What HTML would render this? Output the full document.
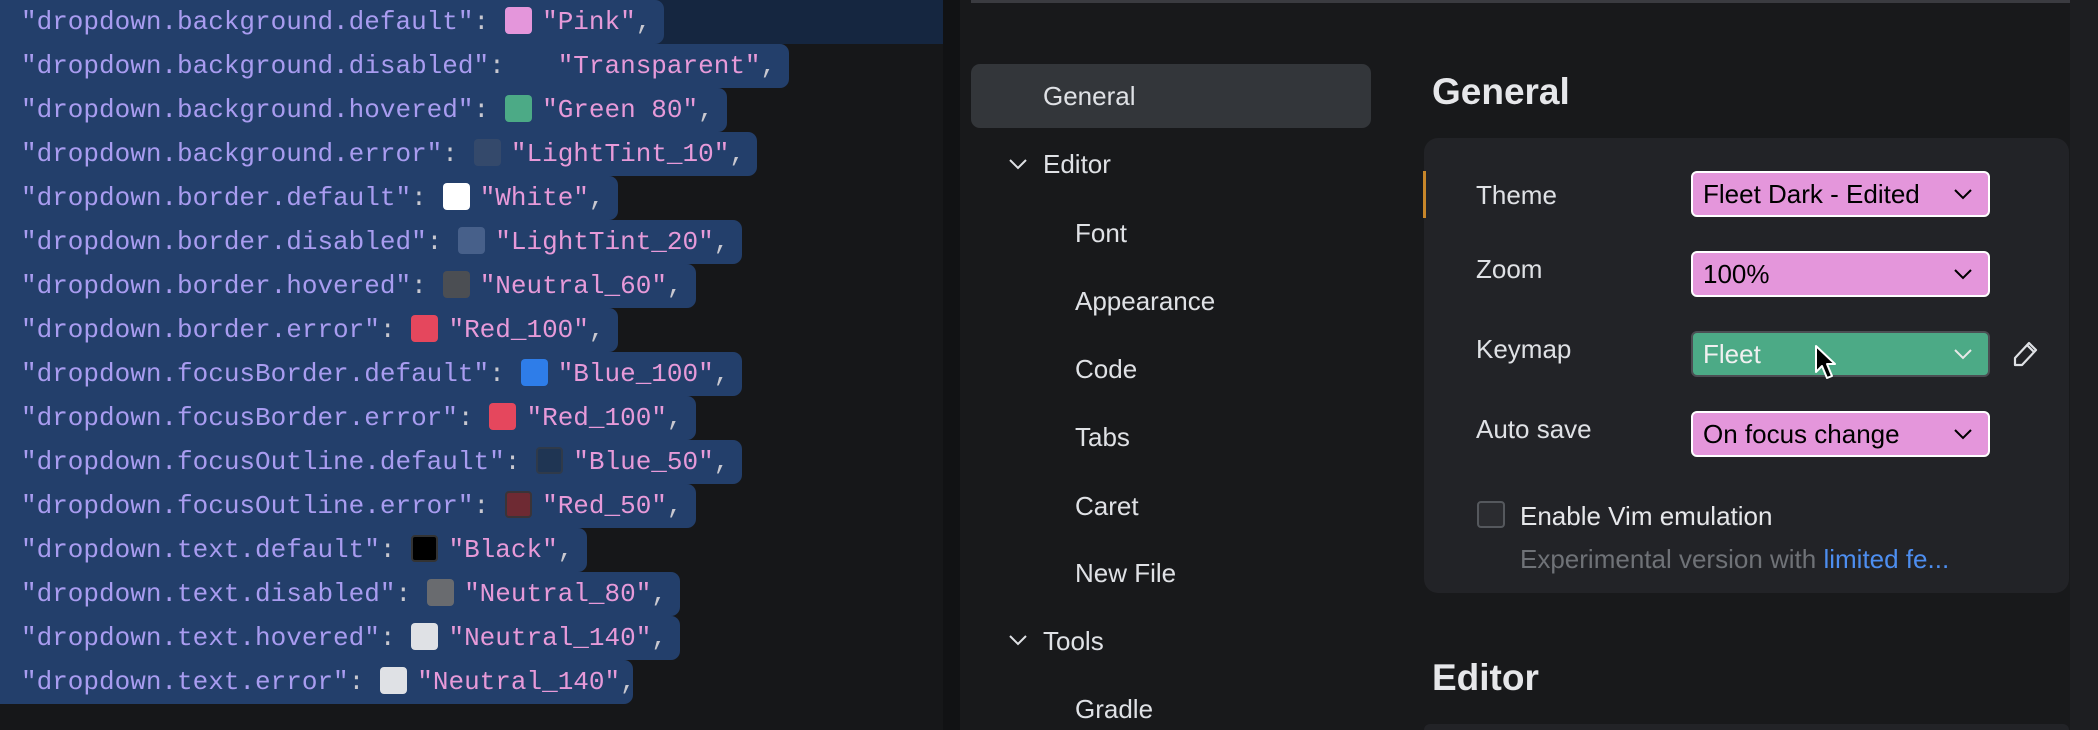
<!DOCTYPE html>
<html><head><meta charset="utf-8"><style>
*{margin:0;padding:0;box-sizing:border-box}
html{width:2098px;height:730px;overflow:hidden}
body{width:2098px;height:730px;overflow:hidden;background:#18191b;position:relative;font-family:"Liberation Sans",sans-serif}
.abs{position:absolute}
#left{position:absolute;left:0;top:0;width:943px;height:730px;background:#161719;overflow:hidden}
.sel{position:absolute;left:0;height:44px;background:#233f6b;border-radius:0 9px 9px 0}
.ln{position:absolute;left:21px;height:44px;line-height:44px;font-family:"Liberation Mono",monospace;font-size:26px;color:#a99cf0;white-space:pre}
.v{color:#e79ad9}.p{color:#c8c8d0}
.sw{display:inline-block;width:27px;height:27px;border-radius:4px;vertical-align:-5px;margin:0 10px 0 16px}
.nav{position:absolute;font-size:26px;color:#dfe1e5}
.lab{position:absolute;left:1476px;font-size:26px;color:#dfe1e5}
.dd{position:absolute;left:1691px;width:299px;height:46px;border:2px solid #fff;border-radius:6px;background:#e496db;font-size:26px;color:#000;line-height:42px;padding-left:10px}
.dd svg{position:absolute;right:16px;top:15px}
</style></head><body>
<div id="left">
<div class="abs" style="left:0;top:0;width:943px;height:44px;background:#152640"></div>
<div class="sel" style="top:0;width:664px"></div>
<div class="sel" style="top:44px;width:789px"></div>
<div class="sel" style="top:88px;width:727px"></div>
<div class="sel" style="top:132px;width:757px"></div>
<div class="sel" style="top:176px;width:618px"></div>
<div class="sel" style="top:220px;width:742px"></div>
<div class="sel" style="top:264px;width:696px"></div>
<div class="sel" style="top:308px;width:618px"></div>
<div class="sel" style="top:352px;width:742px"></div>
<div class="sel" style="top:396px;width:696px"></div>
<div class="sel" style="top:440px;width:742px"></div>
<div class="sel" style="top:484px;width:696px"></div>
<div class="sel" style="top:528px;width:587px"></div>
<div class="sel" style="top:572px;width:680px"></div>
<div class="sel" style="top:616px;width:680px"></div>
<div class="sel" style="top:660px;width:633px"></div>
<div class="ln" style="top:0">"dropdown.background.default"<span class="p">:</span><span class="sw" style="background:#e496db"></span><span class="v">"Pink"</span><span class="p">,</span></div>
<div class="ln" style="top:44px">"dropdown.background.disabled"<span class="p">:</span><span class="sw" style="background:transparent"></span><span class="v">"Transparent"</span><span class="p">,</span></div>
<div class="ln" style="top:88px">"dropdown.background.hovered"<span class="p">:</span><span class="sw" style="background:#4caa86"></span><span class="v">"Green 80"</span><span class="p">,</span></div>
<div class="ln" style="top:132px">"dropdown.background.error"<span class="p">:</span><span class="sw" style="background:#34496b"></span><span class="v">"LightTint_10"</span><span class="p">,</span></div>
<div class="ln" style="top:176px">"dropdown.border.default"<span class="p">:</span><span class="sw" style="background:#fff"></span><span class="v">"White"</span><span class="p">,</span></div>
<div class="ln" style="top:220px">"dropdown.border.disabled"<span class="p">:</span><span class="sw" style="background:#47608a"></span><span class="v">"LightTint_20"</span><span class="p">,</span></div>
<div class="ln" style="top:264px">"dropdown.border.hovered"<span class="p">:</span><span class="sw" style="background:#4b4e53"></span><span class="v">"Neutral_60"</span><span class="p">,</span></div>
<div class="ln" style="top:308px">"dropdown.border.error"<span class="p">:</span><span class="sw" style="background:#e5475d"></span><span class="v">"Red_100"</span><span class="p">,</span></div>
<div class="ln" style="top:352px">"dropdown.focusBorder.default"<span class="p">:</span><span class="sw" style="background:#2e7de9"></span><span class="v">"Blue_100"</span><span class="p">,</span></div>
<div class="ln" style="top:396px">"dropdown.focusBorder.error"<span class="p">:</span><span class="sw" style="background:#e5475d"></span><span class="v">"Red_100"</span><span class="p">,</span></div>
<div class="ln" style="top:440px">"dropdown.focusOutline.default"<span class="p">:</span><span class="sw" style="background:#1f3553;border:2px solid #2f3a4a"></span><span class="v">"Blue_50"</span><span class="p">,</span></div>
<div class="ln" style="top:484px">"dropdown.focusOutline.error"<span class="p">:</span><span class="sw" style="background:#6e2a33;border:2px solid #3a3438"></span><span class="v">"Red_50"</span><span class="p">,</span></div>
<div class="ln" style="top:528px">"dropdown.text.default"<span class="p">:</span><span class="sw" style="background:#000;border:2px solid #333"></span><span class="v">"Black"</span><span class="p">,</span></div>
<div class="ln" style="top:572px">"dropdown.text.disabled"<span class="p">:</span><span class="sw" style="background:#696b6f"></span><span class="v">"Neutral_80"</span><span class="p">,</span></div>
<div class="ln" style="top:616px">"dropdown.text.hovered"<span class="p">:</span><span class="sw" style="background:#dfe1e5"></span><span class="v">"Neutral_140"</span><span class="p">,</span></div>
<div class="ln" style="top:660px">"dropdown.text.error"<span class="p">:</span><span class="sw" style="background:#dfe1e5"></span><span class="v">"Neutral_140"</span><span class="p">,</span></div>
</div>
<div class="abs" style="left:943px;top:0;width:17px;height:730px;background:#111214"></div>
<div class="abs" style="left:2070px;top:0;width:28px;height:730px;background:#1d1e21"></div>
<div class="abs" style="left:971px;top:0;width:1099px;height:3px;background:#3a3b40"></div>

<div class="abs" style="left:971px;top:64px;width:400px;height:64px;background:#33363a;border-radius:9px"></div>
<div class="nav" style="left:1043px;top:81px">General</div>
<svg class="abs" style="left:1009px;top:158px" width="18" height="12"><path d="M1 2 L9 10 L17 2" fill="none" stroke="#dfe1e5" stroke-width="2"/></svg>
<div class="nav" style="left:1043px;top:149px">Editor</div>
<div class="nav" style="left:1075px;top:218px">Font</div>
<div class="nav" style="left:1075px;top:286px">Appearance</div>
<div class="nav" style="left:1075px;top:354px">Code</div>
<div class="nav" style="left:1075px;top:422px">Tabs</div>
<div class="nav" style="left:1075px;top:491px">Caret</div>
<div class="nav" style="left:1075px;top:558px">New File</div>
<svg class="abs" style="left:1009px;top:634px" width="18" height="12"><path d="M1 2 L9 10 L17 2" fill="none" stroke="#dfe1e5" stroke-width="2"/></svg>
<div class="nav" style="left:1043px;top:626px">Tools</div>
<div class="nav" style="left:1075px;top:694px">Gradle</div>

<div class="abs" style="left:1432px;top:71px;font-size:37px;font-weight:bold;color:#e6e7ea">General</div>
<div class="abs" style="left:1432px;top:657px;font-size:37px;font-weight:bold;color:#e6e7ea">Editor</div>
<div class="abs" style="left:1424px;top:138px;width:645px;height:455px;background:#222327;border-radius:14px"></div>
<div class="abs" style="left:1424px;top:724px;width:645px;height:6px;background:#222327;border-radius:6px 6px 0 0"></div>
<div class="abs" style="left:1423px;top:171px;width:3px;height:47px;background:#c7862a"></div>

<div class="lab" style="top:180px">Theme</div>
<div class="lab" style="top:254px">Zoom</div>
<div class="lab" style="top:334px">Keymap</div>
<div class="lab" style="top:414px">Auto save</div>
<div class="dd" style="top:171px">Fleet Dark - Edited<svg width="18" height="12"><path d="M1 2 L9 10 L17 2" fill="none" stroke="#000" stroke-width="2"/></svg></div>
<div class="dd" style="top:251px">100%<svg width="18" height="12"><path d="M1 2 L9 10 L17 2" fill="none" stroke="#000" stroke-width="2"/></svg></div>
<div class="dd" style="top:331px;background:#4caa86;border-color:#4b4e53;color:#f0f0f0">Fleet<svg width="18" height="12"><path d="M1 2 L9 10 L17 2" fill="none" stroke="#e8e8e8" stroke-width="2"/></svg></div>
<div class="dd" style="top:411px">On focus change<svg width="18" height="12"><path d="M1 2 L9 10 L17 2" fill="none" stroke="#000" stroke-width="2"/></svg></div>
<svg class="abs" style="left:2012px;top:340px" width="30" height="28"><path d="M3 25 L3 18 L17 3 L24 10 L10 25 Z M15 5 L22 12" fill="none" stroke="#dfe1e5" stroke-width="2.2" stroke-linejoin="round"/></svg>
<svg class="abs" style="left:1814px;top:344px" width="28" height="40"><path d="M2 2 L2 28 L8 22 L13 34 L18 32 L13 20 L21 20 Z" fill="#000" stroke="#fff" stroke-width="2" stroke-linejoin="round"/></svg>

<div class="abs" style="left:1477px;top:501px;width:28px;height:27px;border:2px solid #55585d;border-radius:4px;background:#2b2c30"></div>
<div class="abs" style="left:1520px;top:501px;font-size:26px;color:#e6e7ea">Enable Vim emulation</div>
<div class="abs" style="left:1520px;top:544px;font-size:26px;color:#6f7277">Experimental version with <span style="color:#4d8ef0">limited fe...</span></div>
</body></html>
